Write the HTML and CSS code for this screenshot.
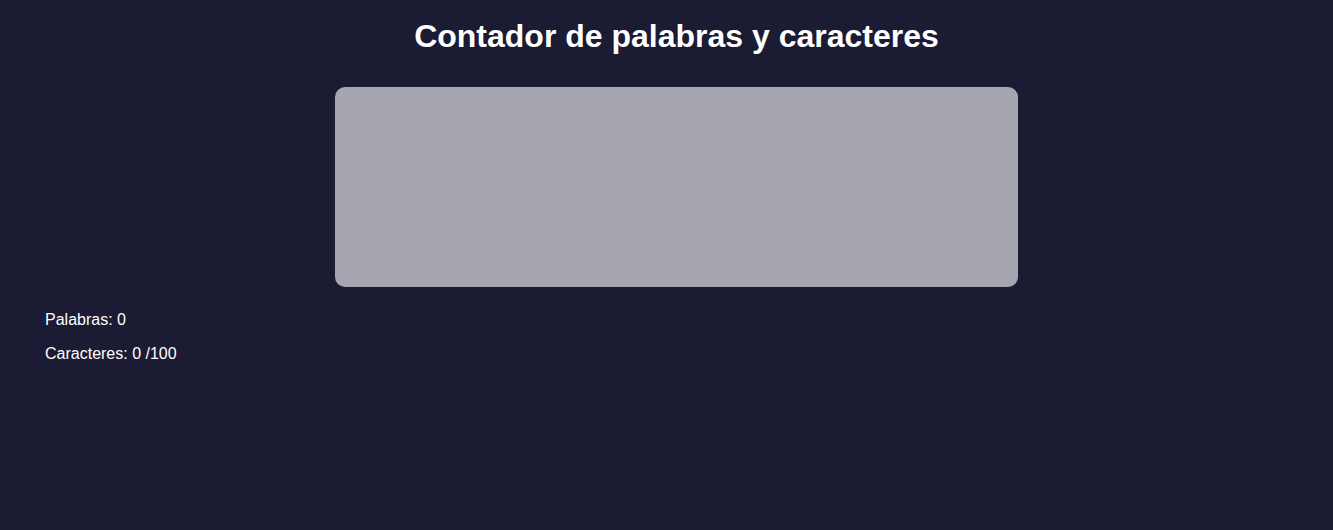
FILE: index.html
```html
<!DOCTYPE html>
<html lang="es">
<head>
<meta charset="utf-8">
<title>Contador de palabras y caracteres</title>
<link rel="stylesheet" href="styles.css">
</head>
<body>
<main class="app">
  <h1 class="title">Contador de palabras y caracteres</h1>
  <textarea class="input" maxlength="100"></textarea>
  <div class="stats">
    <p class="stat">Palabras: <span>0</span></p>
    <p class="stat">Caracteres: <span>0</span> /100</p>
  </div>
</main>
</body>
</html>
```

FILE: styles.css
```css
html, body {
  margin: 0;
  padding: 0;
  background: #1b1b33;
  color: #ffffff;
  font-family: "Liberation Sans", Arial, sans-serif;
}
.app {
  display: flex;
  flex-direction: column;
  align-items: center;
  padding-left: 20px;
}
.title {
  margin: 18px 0 0;
  font-size: 32px;
  font-weight: bold;
  line-height: 37px;
}
.input {
  box-sizing: border-box;
  margin-top: 32px;
  width: 683px;
  height: 200px;
  border: none;
  border-radius: 10px;
  background: #a6a6b0;
  resize: none;
  outline: none;
}
.stats {
  align-self: stretch;
  padding: 0 25px;
  margin-top: 24px;
}
.stat {
  margin: 0 0 16px;
  font-size: 16px;
  line-height: 18px;
}
```
